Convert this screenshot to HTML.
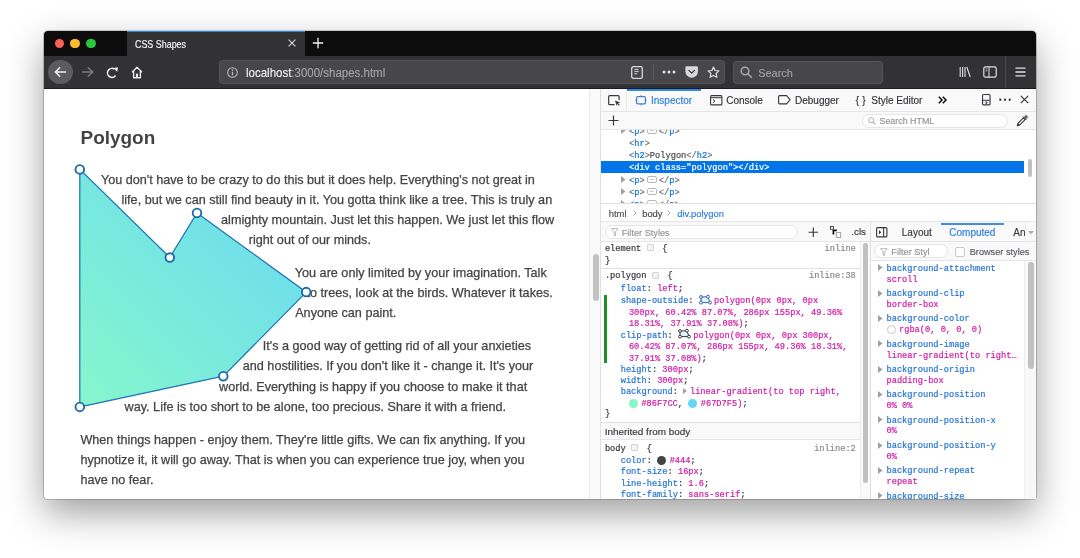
<!DOCTYPE html>
<html><head><meta charset="utf-8">
<style>
*{box-sizing:border-box;margin:0;padding:0}
html,body{width:1080px;height:558px;overflow:hidden;background:#fff;font-family:"Liberation Sans",sans-serif}
#root{position:absolute;left:0;top:0;width:1080px;height:558px;will-change:transform}
body{position:relative}
.a{position:absolute;white-space:pre}
body{-webkit-font-smoothing:antialiased}
#win{position:absolute;left:44.3px;top:30.5px;width:991.7px;height:468.7px;border-radius:4px 4px 3px 3px;background:#fff;
 box-shadow:0 14px 36px rgba(0,0,0,.38),0 0 0 .6px rgba(0,0,0,.35)}
#title{position:absolute;left:44.3px;top:30.5px;width:991.7px;height:25.3px;background:#0c0c0d;border-radius:4px 4px 0 0}
.light{position:absolute;top:38.5px;width:9.6px;height:9.6px;border-radius:50%}
#tab{position:absolute;left:127.3px;top:30.5px;width:177.5px;height:25.3px;background:#323234}
#tabbar{position:absolute;left:127.3px;top:30.5px;width:177.5px;height:1.8px;background:#2a86e6}
#tb{position:absolute;left:44.3px;top:55.8px;width:991.7px;height:33.2px;background:#323234;border-bottom:1.6px solid #1c1c1e}
svg{position:absolute;overflow:visible}
#url{position:absolute;left:218.9px;top:60.1px;width:506.1px;height:23.7px;background:#474749;border:1px solid #545456;border-radius:3.5px}
#search{position:absolute;left:733.1px;top:60.6px;width:149.7px;height:23px;background:#474749;border:1px solid #545456;border-radius:3.5px}
.pt{font-size:12.63px;line-height:20.21px;color:#444;-webkit-text-stroke:.25px #444}
.dt{font-size:10px;line-height:12px;color:#333337;-webkit-text-stroke:.15px currentColor}
.mono{font-family:"Liberation Mono",monospace;font-size:8.68px;white-space:pre;position:absolute;-webkit-text-stroke:.2px currentColor}
.g{color:#737373}.tn{color:#0074e8}.tx{color:#0c0c0d}
.badge{display:inline-block;position:relative;top:-1px;width:10.4px;height:7.2px;border:1px solid #b8b8bb;border-radius:2px;font-size:6px;line-height:4.5px;text-align:center;color:#8a8a8c;vertical-align:middle;margin:0 1.8px 0 2px}
.tx{color:#4a4a4f}
.pn{color:#2675d6}.pv{color:#d21aa6}.pd{color:#38383d}
.selico{display:inline-block;width:7px;height:7px;border:1px solid #d4d4d7;background:#f4f4f4;border-radius:1px;vertical-align:-0.5px;margin-right:3.5px}
.icw{display:inline-block;width:15.3px;height:8px;position:relative}
.inl{position:absolute;left:.3px;top:-.4px}
.tw{display:inline-block;width:0;height:0;border-left:4px solid #a0a0a3;border-top:3px solid transparent;border-bottom:3px solid transparent;margin:0 2.8px 0 0;vertical-align:0}
.sw{display:inline-block;width:9px;height:9px;border-radius:50%;vertical-align:-2px;margin-right:3.5px}
.sw2{display:inline-block;width:9px;height:9px;border-radius:50%;border:1px solid #c8c8cb;vertical-align:-2px;margin-right:3.5px}
</style></head><body><div id="root">
<div id="win"></div>
<div id="title"></div>
<div class="light" style="left:54.6px;background:#fe5f57"></div>
<div class="light" style="left:70.4px;background:#febc2e"></div>
<div class="light" style="left:86.1px;background:#28c840"></div>
<div id="tab"></div><div id="tabbar"></div>
<div class="a" style="left:135.3px;top:39.1px;font-size:10.3px;line-height:12px;color:#f9f9fa;transform:scaleX(.865);transform-origin:0 0;-webkit-text-stroke:.15px #f9f9fa">CSS Shapes</div>
<svg style="left:286.7px;top:37.7px" width="10" height="10" viewBox="0 0 10 10"><path d="M1.6 1.6L8.4 8.4M8.4 1.6L1.6 8.4" stroke="#dcdcde" stroke-width="1.05" fill="none"/></svg>
<svg style="left:312.2px;top:36.9px" width="12" height="12" viewBox="0 0 12 12"><path d="M6 0.8V11.2M0.8 6H11.2" stroke="#f0f0f2" stroke-width="1.3" fill="none"/></svg>
<div id="tb"></div>
<!-- back -->
<div class="a" style="left:47.9px;top:59.7px;width:24.8px;height:24.8px;border-radius:50%;background:#5c5c5e"></div>
<svg style="left:54px;top:66px" width="13" height="12" viewBox="0 0 13 12"><path d="M12 6H1.5M6.2 1.2L1.4 6L6.2 10.8" stroke="#f0f0f2" stroke-width="1.5" fill="none"/></svg>
<svg style="left:80.5px;top:66px" width="13" height="12" viewBox="0 0 13 12"><path d="M1 6H11.5M6.8 1.2L11.6 6L6.8 10.8" stroke="#7c7c7e" stroke-width="1.5" fill="none"/></svg>
<svg style="left:105.5px;top:66.6px" width="13" height="12" viewBox="0 0 13 12"><path d="M9.6 8.6A4.5 4.5 0 1 1 8.6 2.2" stroke="#e8e8ea" stroke-width="1.6" fill="none"/><path d="M7.4 0.9L12 0.2L11.3 4.9Z" fill="#e8e8ea"/></svg>
<svg style="left:130.5px;top:65.6px" width="12" height="13" viewBox="0 0 12 13"><path d="M1 6.2L6 1.2L11 6.2M2.6 5V11.8H9.4V5" stroke="#e8e8ea" stroke-width="1.4" fill="none" stroke-linejoin="round"/><rect x="4.9" y="7.6" width="2.2" height="4.2" fill="#e8e8ea"/></svg>
<div id="url"></div>
<svg style="left:226.7px;top:66.5px" width="11" height="11" viewBox="0 0 11 11"><circle cx="5.5" cy="5.5" r="4.8" stroke="#b9b9bb" stroke-width="1.1" fill="none"/><rect x="4.85" y="4.7" width="1.3" height="3.6" fill="#b9b9bb"/><circle cx="5.5" cy="3.1" r=".8" fill="#b9b9bb"/></svg>
<div class="a" style="left:246px;top:65.9px;font-size:12.1px;line-height:14px;color:#f2f2f4;transform:scaleX(.95);transform-origin:0 0;-webkit-text-stroke:.12px currentColor">localhost<span style="color:#a4a4a6">:3000/shapes.html</span></div>
<svg style="left:630.8px;top:65.9px" width="12" height="13" viewBox="0 0 12 13"><rect x=".7" y=".7" width="10.6" height="11.6" rx="1.6" stroke="#d8d8da" stroke-width="1.3" fill="none"/><path d="M3.4 3.4H7.6M3.4 5.6H7.6M3.4 7.8H6" stroke="#d8d8da" stroke-width="1"/></svg>
<div class="a" style="left:652.8px;top:64px;width:1.2px;height:16px;background:#5a5a5c"></div>
<svg style="left:662.4px;top:70.1px" width="14" height="4" viewBox="0 0 14 4"><circle cx="2" cy="2" r="1.5" fill="#e0e0e2"/><circle cx="7" cy="2" r="1.5" fill="#e0e0e2"/><circle cx="12" cy="2" r="1.5" fill="#e0e0e2"/></svg>
<svg style="left:684.6px;top:66px" width="13.4" height="12" viewBox="0 0 13.4 12"><path d="M.4 1.6Q.4 .3 1.7 .3H11.7Q13 .3 13 1.6V5.4A6.3 6.3 0 0 1 .4 5.4Z" fill="#d8d8da"/><path d="M3.9 4.4L6.7 7.1L9.5 4.4" stroke="#3a3a3c" stroke-width="1.3" fill="none" stroke-linecap="round" stroke-linejoin="round"/></svg>
<svg style="left:706.5px;top:65.8px" width="13" height="13" viewBox="0 0 13 13"><path d="M6.5 1L8.1 4.5L11.9 4.9L9.1 7.5L9.9 11.3L6.5 9.4L3.1 11.3L3.9 7.5L1.1 4.9L4.9 4.5Z" stroke="#e0e0e2" stroke-width="1.2" fill="none" stroke-linejoin="round"/></svg>
<div id="search"></div>
<svg style="left:740px;top:65.8px" width="13" height="13" viewBox="0 0 13 13"><circle cx="5" cy="5" r="3.8" stroke="#a9a9ab" stroke-width="1.5" fill="none"/><path d="M7.8 7.8L11.8 11.8" stroke="#a9a9ab" stroke-width="1.6"/></svg>
<div class="a" style="left:758.3px;top:65.6px;font-size:10.9px;line-height:14px;color:#a4a4a6;-webkit-text-stroke:.12px currentColor">Search</div>
<svg style="left:959.2px;top:66.2px" width="12" height="12" viewBox="0 0 12 12"><path d="M1.2 1V11M3.6 1V11M6 1V11M7.8 1L11.2 11" stroke="#e0e0e2" stroke-width="1.1" fill="none"/></svg>
<svg style="left:983.3px;top:66.2px" width="14" height="12" viewBox="0 0 14 12"><rect x=".8" y=".8" width="12.4" height="10.4" rx="1.6" stroke="#e0e0e2" stroke-width="1.2" fill="none"/><path d="M6 1V11" stroke="#e0e0e2" stroke-width="1"/><path d="M2.6 3H4.4M2.6 4.8H4.4" stroke="#e0e0e2" stroke-width=".8"/></svg>
<div class="a" style="left:1005px;top:56px;width:1px;height:31.5px;background:#4b4b4d"></div>
<svg style="left:1015.3px;top:66.8px" width="11" height="10" viewBox="0 0 11 10"><path d="M.5 1.2H10.5M.5 5H10.5M.5 8.8H10.5" stroke="#e0e0e2" stroke-width="1.3"/></svg>
<!-- CONTENT -->
<div class="a" style="left:80.5px;top:126.53px;font-size:18.95px;line-height:22px;font-weight:bold;color:#444">Polygon</div>
<div class="a pt" style="left:100.9px;top:169.53px">You don't have to be crazy to do this but it does help. Everything's not great in</div>
<div class="a pt" style="left:121.5px;top:189.73px">life, but we can still find beauty in it. You gotta think like a tree. This is truly an</div>
<div class="a pt" style="left:221.1px;top:209.93px">almighty mountain. Just let this happen. We just let this flow</div>
<div class="a pt" style="left:248.8px;top:230.13px">right out of our minds.</div>
<div class="a pt" style="left:294.8px;top:263.03px">You are only limited by your imagination. Talk</div>
<div class="a pt" style="left:306.5px;top:283.23px">to trees, look at the birds. Whatever it takes.</div>
<div class="a pt" style="left:295.2px;top:303.43px">Anyone can paint.</div>
<div class="a pt" style="left:262.8px;top:336.23px">It's a good way of getting rid of all your anxieties</div>
<div class="a pt" style="left:242.8px;top:356.43px">and hostilities. If you don't like it - change it. It's your</div>
<div class="a pt" style="left:219.1px;top:376.63px">world. Everything is happy if you choose to make it that</div>
<div class="a pt" style="left:124.6px;top:396.83px">way. Life is too short to be alone, too precious. Share it with a friend.</div>
<div class="a pt" style="left:80.4px;top:429.73px">When things happen - enjoy them. They're little gifts. We can fix anything. If you</div>
<div class="a pt" style="left:80.4px;top:449.93px">hypnotize it, it will go away. That is when you can experience true joy, when you</div>
<div class="a pt" style="left:80.4px;top:470.13px">have no fear.</div>
<svg style="left:0;top:0" width="1080" height="558" viewBox="0 0 1080 558"><defs><linearGradient id="g" gradientUnits="userSpaceOnUse" x1="79.8" y1="406.9" x2="317.3" y2="169.4"><stop offset="0" stop-color="#86F7CC"/><stop offset="1" stop-color="#67D7F5"/></linearGradient></defs><polygon points="79.8,169.4 79.8,406.9 223.3,376.2 306.2,292.1 197.0,212.9 169.8,257.5" fill="url(#g)" stroke="#2679b5" stroke-width="1.3"/><circle cx="79.8" cy="169.4" r="4.3" fill="#fff" stroke="#1b6ca8" stroke-width="1.9"/><circle cx="79.8" cy="406.9" r="4.3" fill="#fff" stroke="#1b6ca8" stroke-width="1.9"/><circle cx="223.3" cy="376.2" r="4.3" fill="#fff" stroke="#1b6ca8" stroke-width="1.9"/><circle cx="306.2" cy="292.1" r="4.3" fill="#fff" stroke="#1b6ca8" stroke-width="1.9"/><circle cx="197.0" cy="212.9" r="4.3" fill="#fff" stroke="#1b6ca8" stroke-width="1.9"/><circle cx="169.8" cy="257.5" r="4.3" fill="#fff" stroke="#1b6ca8" stroke-width="1.9"/></svg>
<div class="a" style="left:589.4px;top:89px;width:11px;height:410px;background:#fafafa;border-left:1px solid #ececec"></div>
<div class="a" style="left:592.6px;top:254.2px;width:6.4px;height:46.8px;border-radius:3.2px;background:#c2c2c2"></div>
<!-- DEVTOOLS -->
<div class="a" style="left:600px;top:89px;width:436px;height:410px;background:#fff;border-left:1px solid #e0e0e2"></div>
<div class="a" style="left:600.5px;top:89px;width:435.5px;height:22.5px;background:#f9f9fa;border-bottom:1px solid #e6e6e8"></div>
<div class="a" style="left:626px;top:89px;width:1px;height:22px;background:#e8e8ea"></div>
<div class="a" style="left:627px;top:89px;width:74px;height:1.6px;background:#2f88e4"></div>
<svg style="left:607.5px;top:94.8px" width="13" height="11" viewBox="0 0 13 11"><path d="M6.5 9.6H1.6A.9.9 0 0 1 .7 8.7V1.6A.9.9 0 0 1 1.6.7H10.2A.9.9 0 0 1 11.1 1.6V5" stroke="#38383d" stroke-width="1.2" fill="none"/><path d="M7 5.4L12.2 7.5L10.1 8.2L11.9 10L11 10.8L9.3 9L8.6 10.9Z" fill="#38383d"/></svg>
<svg style="left:635.2px;top:94.8px" width="12" height="10.5" viewBox="0 0 12 10.5"><rect x="1.6" y="1.6" width="8.8" height="7.3" rx="1" stroke="#4a7cd4" stroke-width="1.2" fill="none"/><path d="M6 .3V1.6M6 8.9V10.2M.3 5.25H1.6M10.4 5.25H11.7" stroke="#4a7cd4" stroke-width="1.1"/></svg>
<div class="a dt" style="left:651px;top:95.1px;color:#2a7ce0">Inspector</div>
<svg style="left:709.8px;top:94.6px" width="12.5" height="10.5" viewBox="0 0 12.5 10.5"><rect x=".6" y=".6" width="11.3" height="9.3" rx="1" stroke="#38383d" stroke-width="1.1" fill="none"/><path d="M.6 2.7H11.9" stroke="#38383d" stroke-width="1"/><path d="M3 4.6L4.8 6.1L3 7.6" stroke="#38383d" stroke-width="1" fill="none"/></svg>
<div class="a dt" style="left:726.2px;top:95.1px">Console</div>
<svg style="left:778px;top:95.2px" width="13" height="9.5" viewBox="0 0 13 9.5"><path d="M1.4.6H8.6L12 4.75L8.6 8.9H1.4A.8.8 0 0 1 .6 8.1V1.4A.8.8 0 0 1 1.4.6Z" stroke="#38383d" stroke-width="1.1" fill="none"/></svg>
<div class="a dt" style="left:795px;top:95.1px">Debugger</div>
<div class="a dt" style="left:855.8px;top:95.1px;letter-spacing:0.2px">{ }</div>
<div class="a dt" style="left:871.3px;top:95.1px">Style Editor</div>
<svg style="left:937.5px;top:95.8px" width="9" height="8" viewBox="0 0 9 8"><path d="M.8.8L4 4L.8 7.2M4.8.8L8 4L4.8 7.2" stroke="#0c0c0d" stroke-width="1.5" fill="none"/></svg>
<svg style="left:982.2px;top:94.2px" width="8.6" height="11.4" viewBox="0 0 8.6 11.4"><rect x=".55" y=".55" width="7.5" height="10.3" rx="1" stroke="#38383d" stroke-width="1.1" fill="none"/><path d="M.6 6.3H8" stroke="#38383d" stroke-width="1"/><path d="M4.3 7.2V9.6M3.1 8.5L4.3 9.7L5.5 8.5" stroke="#38383d" stroke-width=".9" fill="none"/></svg>
<svg style="left:999.2px;top:98.2px" width="12" height="3.5" viewBox="0 0 12 3.5"><circle cx="1.3" cy="1.75" r="1.15" fill="#38383d"/><circle cx="6" cy="1.75" r="1.15" fill="#38383d"/><circle cx="10.7" cy="1.75" r="1.15" fill="#38383d"/></svg>
<svg style="left:1019.6px;top:95.3px" width="9" height="9" viewBox="0 0 9 9"><path d="M.8.8L8.2 8.2M8.2.8L.8 8.2" stroke="#38383d" stroke-width="1.2"/></svg>
<div class="a" style="left:600.5px;top:112px;width:435.5px;height:17.5px;background:#f9f9fa;border-bottom:1px solid #e6e6e8"></div>
<svg style="left:608.3px;top:115px" width="11" height="11" viewBox="0 0 11 11"><path d="M5.5 .5V10.5M.5 5.5H10.5" stroke="#38383d" stroke-width="1.2"/></svg>
<div class="a" style="left:861.8px;top:113.5px;width:146px;height:14.3px;background:#fff;border:1px solid #e6e6e8;border-radius:7.2px"></div>
<svg style="left:868px;top:116.8px" width="8" height="8" viewBox="0 0 8 8"><circle cx="3.2" cy="3.2" r="2.5" stroke="#b1b1b3" stroke-width="1" fill="none"/><path d="M5 5L7.5 7.5" stroke="#b1b1b3" stroke-width="1.1"/></svg>
<div class="a dt" style="left:879.5px;top:116.1px;color:#939395;font-size:8.9px;line-height:11px">Search HTML</div>
<svg style="left:1016px;top:114.2px" width="13" height="13" viewBox="0 0 13 13"><path d="M1.3 11.7L1.9 9.4L7.4 3.9L9.1 5.6L3.6 11.1Z" stroke="#38383d" stroke-width="1.1" fill="none" stroke-linejoin="round"/><path d="M1.3 11.7L3 10" stroke="#38383d" stroke-width="1.3"/><path d="M7 2.6L10.4 6M10 .8V5.2M7.8 3H12.2" stroke="#38383d" stroke-width="1"/></svg>
<div class="a" style="left:601px;top:129.5px;width:435px;height:73.5px;overflow:hidden">
<svg style="left:19.80px;top:-2.20px" width="5" height="7" viewBox="0 0 5 7"><path d="M0 0L4.5 3.5L0 7Z" fill="#a0a0a3"/></svg>
<div class="a mono" style="left:28.00px;top:-3.45px;line-height:12.10px"><span class="g">&lt;</span><span class="tn">p</span><span class="g">&gt;</span><span class="badge">…</span><span class="g">&lt;/</span><span class="tn">p</span><span class="g">&gt;</span></div>
<div class="a mono" style="left:28.00px;top:8.65px;line-height:12.10px"><span class="g">&lt;</span><span class="tn">hr</span><span class="g">&gt;</span></div>
<div class="a mono" style="left:28.00px;top:20.85px;line-height:12.10px"><span class="g">&lt;</span><span class="tn">h2</span><span class="g">&gt;</span><span class="tx">Polygon</span><span class="g">&lt;/</span><span class="tn">h2</span><span class="g">&gt;</span></div>
<div class="a" style="left:0.00px;top:31.80px;width:423.2px;height:11.6px;background:#0074e8"></div>
<div class="a mono" style="left:28.00px;top:32.85px;line-height:12.10px"><span style="color:#fff">&lt;div class="polygon"&gt;&lt;/div&gt;</span></div>
<svg style="left:19.80px;top:46.40px" width="5" height="7" viewBox="0 0 5 7"><path d="M0 0L4.5 3.5L0 7Z" fill="#a0a0a3"/></svg>
<div class="a mono" style="left:28.00px;top:45.15px;line-height:12.10px"><span class="g">&lt;</span><span class="tn">p</span><span class="g">&gt;</span><span class="badge">…</span><span class="g">&lt;/</span><span class="tn">p</span><span class="g">&gt;</span></div>
<svg style="left:19.80px;top:58.40px" width="5" height="7" viewBox="0 0 5 7"><path d="M0 0L4.5 3.5L0 7Z" fill="#a0a0a3"/></svg>
<div class="a mono" style="left:28.00px;top:57.15px;line-height:12.10px"><span class="g">&lt;</span><span class="tn">p</span><span class="g">&gt;</span><span class="badge">…</span><span class="g">&lt;/</span><span class="tn">p</span><span class="g">&gt;</span></div>
<svg style="left:19.80px;top:70.50px" width="5" height="7" viewBox="0 0 5 7"><path d="M0 0L4.5 3.5L0 7Z" fill="#a0a0a3"/></svg>
<div class="a mono" style="left:28.00px;top:69.25px;line-height:12.10px"><span class="g">&lt;</span><span class="tn">p</span><span class="g">&gt;</span><span class="badge">…</span><span class="g">&lt;/</span><span class="tn">p</span><span class="g">&gt;</span></div>
</div>
<div class="a" style="left:1027.8px;top:158.6px;width:4.6px;height:18.4px;border-radius:2.3px;background:#c1c1c1"></div>
<div class="a" style="left:600.5px;top:203px;width:435.5px;height:19px;background:#fff;border-top:1px solid #e0e0e2;border-bottom:1px solid #e6e6e8"></div>
<div class="a dt" style="left:608.8px;top:207.8px;color:#4a4a4f;font-size:9.4px;line-height:11px">html</div>
<svg style="left:632.7px;top:210.2px" width="4" height="6" viewBox="0 0 4 6"><path d="M.5.5L3 3L.5 5.5" stroke="#a0a0a3" stroke-width=".9" fill="none"/></svg>
<div class="a dt" style="left:642.2px;top:207.8px;color:#4a4a4f;font-size:9.4px;line-height:11px">body</div>
<svg style="left:667.3px;top:210.2px" width="4" height="6" viewBox="0 0 4 6"><path d="M.5.5L3 3L.5 5.5" stroke="#a0a0a3" stroke-width=".9" fill="none"/></svg>
<div class="a dt" style="left:677.2px;top:207.8px;color:#2a7ce0;font-size:9.4px;line-height:11px">div.polygon</div>
<!-- RULES -->
<div class="a" style="left:600.5px;top:222px;width:270px;height:20px;background:#f9f9fa;border-bottom:1px solid #e6e6e8"></div>
<div class="a" style="left:604.5px;top:225.2px;width:193.8px;height:14.3px;background:#fff;border:1px solid #e6e6e8;border-radius:7.2px"></div>
<svg style="left:611px;top:228.3px" width="7.5" height="8.5" viewBox="0 0 7.5 8.5"><path d="M.5.6H7L4.4 3.8V7.9L3.1 7V3.8Z" stroke="#b1b1b3" stroke-width=".9" fill="none" stroke-linejoin="round"/></svg>
<div class="a dt" style="left:621.7px;top:227.6px;color:#939395;font-size:9.2px;line-height:11px">Filter Styles</div>
<svg style="left:807.6px;top:226.6px" width="10.6" height="10.6" viewBox="0 0 10.6 10.6"><path d="M5.3 .5V10.1M.5 5.3H10.1" stroke="#38383d" stroke-width="1.15"/></svg>
<svg style="left:829.6px;top:225.8px" width="12" height="12" viewBox="0 0 12 12"><rect x=".5" y=".5" width="3" height="2.8" stroke="#38383d" stroke-width=".9" fill="none"/><path d="M3.4 4V8.6M3.4 4.3H6.8" stroke="#0c0c0d" stroke-width="1.7"/><rect x="6.3" y="6.6" width="4.4" height="4.9" stroke="#9a9a9d" stroke-width=".9" fill="none"/></svg>
<div class="a dt" style="left:851.3px;top:226.1px;font-size:9.8px;line-height:12px;color:#38383d">.cls</div>
<div class="a" style="left:859.8px;top:242px;width:10.2px;height:257px;background:#fafafa;border-left:1px solid #ededed"></div>
<div class="a" style="left:862.6px;top:243.3px;width:5.8px;height:240px;border-radius:2.9px;background:#c1c1c1"></div>
<div class="a" style="left:869.9px;top:222px;width:1px;height:277px;background:#e0e0e2"></div>
<div class="a mono" style="left:604.90px;top:243.90px;line-height:11.5px"><span class="pd">element</span> <span class="selico"></span><span class="pd"> {</span></div>
<div class="a mono" style="left:805px;top:243.90px;line-height:11.5px;width:50.8px;text-align:right;color:#8a8a8f">inline</div>
<div class="a mono" style="left:604.90px;top:255.90px;line-height:11.5px"><span class="pd">}</span></div>
<div class="a" style="left:600.5px;top:267.7px;width:259.3px;height:1px;background:#e0e0e2"></div>
<div class="a mono" style="left:604.90px;top:271.20px;line-height:11.5px"><span class="pd">.polygon</span> <span class="selico"></span><span class="pd"> {</span></div>
<div class="a mono" style="left:785px;top:271.20px;line-height:11.5px;width:70.8px;text-align:right;color:#8a8a8f">inline:38</div>
<div class="a" style="left:603.9px;top:294.5px;width:2.9px;height:68px;background:#1e8f22"></div>
<div class="a mono" style="left:620.70px;top:284.10px;line-height:11.5px"><span class="pn">float</span><span class="pd">: </span><span class="pv">left</span><span class="pd">;</span></div>
<div class="a mono" style="left:620.70px;top:295.20px;line-height:11.5px"><span class="pn">shape-outside</span><span class="pd">: </span><span class="icw"><svg class="inl" width="12.5" height="9.5" viewBox="0 0 12.5 9.5"><path d="M2 2L8.9 1.7L11 7.6L2 7.6Z" stroke="#3566b8" stroke-width="1" fill="#dff3fb"/><circle cx="2" cy="2" r="1.45" fill="#fff" stroke="#3566b8" stroke-width="1"/><circle cx="8.9" cy="1.7" r="1.45" fill="#fff" stroke="#3566b8" stroke-width="1"/><circle cx="11" cy="7.6" r="1.45" fill="#fff" stroke="#3566b8" stroke-width="1"/><circle cx="2" cy="7.6" r="1.45" fill="#fff" stroke="#3566b8" stroke-width="1"/></svg></span><span class="pv">polygon(0px 0px, 0px</span></div>
<div class="a mono" style="left:628.90px;top:307.80px;line-height:11.5px"><span class="pv">300px, 60.42% 87.07%, 286px 155px, 49.36%</span></div>
<div class="a mono" style="left:628.90px;top:318.90px;line-height:11.5px"><span class="pv">18.31%, 37.91% 37.08%)</span><span class="pd">;</span></div>
<div class="a mono" style="left:620.70px;top:329.80px;line-height:11.5px"><span class="pn">clip-path</span><span class="pd">: </span><span class="icw"><svg class="inl" width="12.5" height="9.5" viewBox="0 0 12.5 9.5"><path d="M2 2L8.9 1.7L11 7.6L2 7.6Z" stroke="#38383d" stroke-width="1" fill="#dff3fb"/><circle cx="2" cy="2" r="1.45" fill="#fff" stroke="#38383d" stroke-width="1"/><circle cx="8.9" cy="1.7" r="1.45" fill="#fff" stroke="#38383d" stroke-width="1"/><circle cx="11" cy="7.6" r="1.45" fill="#fff" stroke="#38383d" stroke-width="1"/><circle cx="2" cy="7.6" r="1.45" fill="#fff" stroke="#38383d" stroke-width="1"/></svg></span><span class="pv">polygon(0px 0px, 0px 300px,</span></div>
<div class="a mono" style="left:628.90px;top:341.80px;line-height:11.5px"><span class="pv">60.42% 87.07%, 286px 155px, 49.36% 18.31%,</span></div>
<div class="a mono" style="left:628.90px;top:353.50px;line-height:11.5px"><span class="pv">37.91% 37.08%)</span><span class="pd">;</span></div>
<div class="a mono" style="left:620.70px;top:365.00px;line-height:11.5px"><span class="pn">height</span><span class="pd">: </span><span class="pv">300px</span><span class="pd">;</span></div>
<div class="a mono" style="left:620.70px;top:375.90px;line-height:11.5px"><span class="pn">width</span><span class="pd">: </span><span class="pv">300px</span><span class="pd">;</span></div>
<div class="a mono" style="left:620.70px;top:387.30px;line-height:11.5px"><span class="pn">background</span><span class="pd">: </span><span class="tw"></span><span class="pv">linear-gradient(to top right,</span></div>
<div class="a mono" style="left:628.90px;top:399.00px;line-height:11.5px"><span class="sw" style="background:#86F7CC"></span><span class="pv">#86F7CC</span><span class="pd">, </span><span class="sw" style="background:#67D7F5"></span><span class="pv">#67D7F5)</span><span class="pd">;</span></div>
<div class="a mono" style="left:605.10px;top:409.00px;line-height:11.5px"><span class="pd">}</span></div>
<div class="a" style="left:600.5px;top:422px;width:259.3px;height:18.3px;background:#f9f9fa;border-top:1px solid #e0e0e2;border-bottom:1px solid #e6e6e8"></div>
<div class="a dt" style="left:604.7px;top:426.1px;color:#38383d;font-size:9.95px;line-height:12px">Inherited from body</div>
<div class="a mono" style="left:604.90px;top:443.50px;line-height:11.5px"><span class="pd">body</span> <span class="selico"></span><span class="pd"> {</span></div>
<div class="a mono" style="left:785px;top:443.50px;line-height:11.5px;width:70.8px;text-align:right;color:#8a8a8f">inline:2</div>
<div class="a mono" style="left:620.70px;top:455.60px;line-height:11.5px"><span class="pn">color</span><span class="pd">: </span><span class="sw" style="background:#444"></span><span class="pv">#444</span><span class="pd">;</span></div>
<div class="a mono" style="left:620.70px;top:467.40px;line-height:11.5px"><span class="pn">font-size</span><span class="pd">: </span><span class="pv">16px</span><span class="pd">;</span></div>
<div class="a mono" style="left:620.70px;top:478.80px;line-height:11.5px"><span class="pn">line-height</span><span class="pd">: </span><span class="pv">1.6</span><span class="pd">;</span></div>
<div class="a mono" style="left:620.70px;top:489.80px;line-height:11.5px"><span class="pn">font-family</span><span class="pd">: </span><span class="pv">sans-serif</span><span class="pd">;</span></div>
<div class="a" style="left:870.5px;top:222px;width:165.5px;height:20px;background:#f9f9fa;border-bottom:1px solid #e6e6e8"></div>
<svg style="left:876.2px;top:227.2px" width="11.5" height="10.5" viewBox="0 0 11.5 10.5"><rect x=".6" y=".6" width="10.3" height="9.3" rx="1" stroke="#38383d" stroke-width="1.1" fill="none"/><path d="M7.6 .6V9.9" stroke="#38383d" stroke-width="1.1"/><path d="M3 3L5.2 5.25L3 7.5Z" fill="#38383d"/></svg>
<div class="a dt" style="left:901.8px;top:226.6px;color:#38383d">Layout</div>
<div class="a" style="left:940.7px;top:223px;width:63.6px;height:1.7px;background:#3b8ee0"></div>
<div class="a" style="left:1024.6px;top:222px;width:1px;height:19.5px;background:#ececee"></div>
<div class="a dt" style="left:949.3px;top:226.6px;color:#2a7ce0">Computed</div>
<div class="a dt" style="left:1013.3px;top:226.6px;color:#38383d">An</div>
<svg style="left:1027.5px;top:230.6px" width="6" height="4" viewBox="0 0 6 4"><path d="M0 0H6L3 3.5Z" fill="#b1b1b3"/></svg>
<div class="a" style="left:870.5px;top:242px;width:165.5px;height:18.5px;background:#f9f9fa;border-bottom:1px solid #e6e6e8"></div>
<div class="a" style="left:874.3px;top:244.2px;width:73.5px;height:14.3px;background:#fff;border:1px solid #e6e6e8;border-radius:7.2px"></div>
<svg style="left:880.3px;top:247.5px" width="7.5" height="8.5" viewBox="0 0 7.5 8.5"><path d="M.5.6H7L4.4 3.8V7.9L3.1 7V3.8Z" stroke="#b1b1b3" stroke-width=".9" fill="none" stroke-linejoin="round"/></svg>
<div class="a dt" style="left:891.3px;top:246.6px;color:#939395;font-size:9.2px;line-height:11px">Filter Styl</div>
<div class="a" style="left:955px;top:247px;width:10px;height:10px;background:#fff;border:1px solid #c8c8cb;border-radius:2px"></div>
<div class="a dt" style="left:969.7px;top:246.6px;color:#5a5a5f;font-size:9.2px;line-height:11px">Browser styles</div>
<div class="a" style="left:1024px;top:260.5px;width:12px;height:238.5px;background:#f8f8f8;border-left:1px solid #f0f0f0"></div>
<div class="a" style="left:1027.6px;top:262px;width:6.3px;height:107.2px;border-radius:3.1px;background:#c1c1c1"></div>
<div class="a" style="left:871.5px;top:260.5px;width:155px;height:238.5px;overflow:hidden">
<svg style="left:6.40px;top:3.90px" width="5" height="7" viewBox="0 0 5 7"><path d="M0 0L4.5 3.5L0 7Z" fill="#a0a0a3"/></svg>
<div class="a mono" style="left:15.00px;top:3.20px;line-height:11.5px"><span class="pn">background-attachment</span></div>
<div class="a mono" style="left:15.00px;top:14.00px;line-height:11.5px"><span class="pv">scroll</span></div>
<svg style="left:6.40px;top:29.40px" width="5" height="7" viewBox="0 0 5 7"><path d="M0 0L4.5 3.5L0 7Z" fill="#a0a0a3"/></svg>
<div class="a mono" style="left:15.00px;top:28.70px;line-height:11.5px"><span class="pn">background-clip</span></div>
<div class="a mono" style="left:15.00px;top:39.50px;line-height:11.5px"><span class="pv">border-box</span></div>
<svg style="left:6.40px;top:54.50px" width="5" height="7" viewBox="0 0 5 7"><path d="M0 0L4.5 3.5L0 7Z" fill="#a0a0a3"/></svg>
<div class="a mono" style="left:15.00px;top:53.80px;line-height:11.5px"><span class="pn">background-color</span></div>
<div class="a mono" style="left:15.00px;top:64.60px;line-height:11.5px"><span class="sw2"></span><span class="pv">rgba(0, 0, 0, 0)</span></div>
<svg style="left:6.40px;top:79.90px" width="5" height="7" viewBox="0 0 5 7"><path d="M0 0L4.5 3.5L0 7Z" fill="#a0a0a3"/></svg>
<div class="a mono" style="left:15.00px;top:79.20px;line-height:11.5px"><span class="pn">background-image</span></div>
<div class="a mono" style="left:15.00px;top:90.00px;line-height:11.5px"><span class="pv">linear-gradient(to right…</span></div>
<svg style="left:6.40px;top:105.30px" width="5" height="7" viewBox="0 0 5 7"><path d="M0 0L4.5 3.5L0 7Z" fill="#a0a0a3"/></svg>
<div class="a mono" style="left:15.00px;top:104.60px;line-height:11.5px"><span class="pn">background-origin</span></div>
<div class="a mono" style="left:15.00px;top:115.40px;line-height:11.5px"><span class="pv">padding-box</span></div>
<svg style="left:6.40px;top:130.50px" width="5" height="7" viewBox="0 0 5 7"><path d="M0 0L4.5 3.5L0 7Z" fill="#a0a0a3"/></svg>
<div class="a mono" style="left:15.00px;top:129.80px;line-height:11.5px"><span class="pn">background-position</span></div>
<div class="a mono" style="left:15.00px;top:140.60px;line-height:11.5px"><span class="pv">0% 0%</span></div>
<svg style="left:6.40px;top:155.80px" width="5" height="7" viewBox="0 0 5 7"><path d="M0 0L4.5 3.5L0 7Z" fill="#a0a0a3"/></svg>
<div class="a mono" style="left:15.00px;top:155.10px;line-height:11.5px"><span class="pn">background-position-x</span></div>
<div class="a mono" style="left:15.00px;top:165.90px;line-height:11.5px"><span class="pv">0%</span></div>
<svg style="left:6.40px;top:181.10px" width="5" height="7" viewBox="0 0 5 7"><path d="M0 0L4.5 3.5L0 7Z" fill="#a0a0a3"/></svg>
<div class="a mono" style="left:15.00px;top:180.40px;line-height:11.5px"><span class="pn">background-position-y</span></div>
<div class="a mono" style="left:15.00px;top:191.20px;line-height:11.5px"><span class="pv">0%</span></div>
<svg style="left:6.40px;top:206.50px" width="5" height="7" viewBox="0 0 5 7"><path d="M0 0L4.5 3.5L0 7Z" fill="#a0a0a3"/></svg>
<div class="a mono" style="left:15.00px;top:205.80px;line-height:11.5px"><span class="pn">background-repeat</span></div>
<div class="a mono" style="left:15.00px;top:216.60px;line-height:11.5px"><span class="pv">repeat</span></div>
<svg style="left:6.40px;top:231.70px" width="5" height="7" viewBox="0 0 5 7"><path d="M0 0L4.5 3.5L0 7Z" fill="#a0a0a3"/></svg>
<div class="a mono" style="left:15.00px;top:231.00px;line-height:11.5px"><span class="pn">background-size</span></div>
<div class="a mono" style="left:15.00px;top:241.80px;line-height:11.5px"><span class="pv">auto</span></div>
</div>
<!-- END -->
</div></body></html>
